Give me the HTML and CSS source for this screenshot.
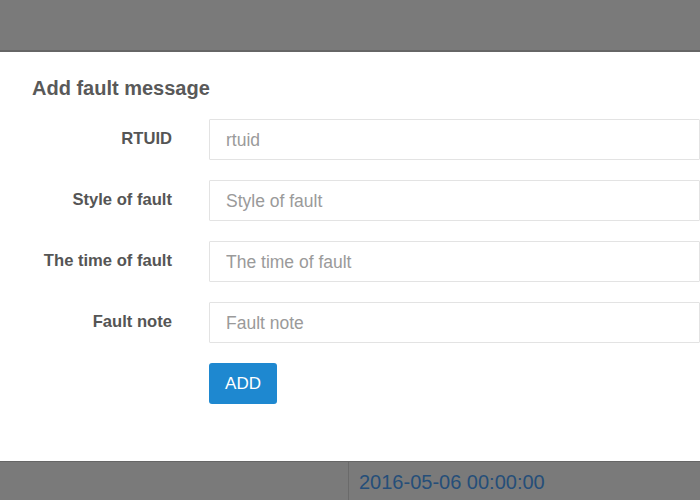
FILE: index.html
```html
<!DOCTYPE html>
<html>
<head>
<meta charset="utf-8">
<link rel="stylesheet" href="styles.css">
</head>
<body>
<div class="top"></div>
<div class="modal">
  <h4 class="title">Add fault message</h4>
  <form class="form">
    <div class="row">
      <label class="label">RTUID</label>
      <input class="input" type="text" placeholder="rtuid">
    </div>
    <div class="row">
      <label class="label">Style of fault</label>
      <input class="input" type="text" placeholder="Style of fault">
    </div>
    <div class="row">
      <label class="label">The time of fault</label>
      <input class="input" type="text" placeholder="The time of fault">
    </div>
    <div class="row">
      <label class="label">Fault note</label>
      <input class="input" type="text" placeholder="Fault note">
    </div>
    <div class="row">
      <span class="label"></span>
      <button class="btn" type="button">ADD</button>
    </div>
  </form>
</div>
<div class="bottom">
  <div class="cell first"></div>
  <div class="cell">2016-05-06 00:00:00</div>
</div>
</body>
</html>
```
FILE: styles.css
```css
html, body {
  margin: 0;
  padding: 0;
  width: 700px;
  height: 500px;
  overflow: hidden;
  background: #7a7a7a;
  font-family: "Liberation Sans", Arial, sans-serif;
}
.top {
  height: 50px;
  border-bottom: 2px solid #666;
  box-sizing: content-box;
}
.modal {
  background: #fff;
  height: 409px;
  box-sizing: border-box;
  padding: 24px 0 0 32px;
  width: 720px;
}
.title {
  margin: 0 0 19px 0;
  font-size: 20px;
  font-weight: bold;
  color: #595959;
  line-height: 24px;
}
.form {
  display: flex;
  flex-direction: column;
  gap: 20px;
}
.row {
  display: flex;
  align-items: flex-start;
}
.label {
  width: 140px;
  text-align: right;
  font-weight: bold;
  font-size: 16.6px;
  line-height: 20px;
  color: #555;
  padding-top: 10px;
  margin-right: 37px;
  flex: none;
}
.input {
  width: 491px;
  height: 41px;
  box-sizing: border-box;
  border: 1px solid #e3e3e3;
  border-radius: 1px;
  padding: 1px 16px 0;
  font-family: "Liberation Sans", Arial, sans-serif;
  font-size: 17.5px;
  color: #555;
  outline: none;
  flex: none;
}
.input::placeholder {
  color: #9a9a9a;
}
.btn {
  width: 68px;
  height: 41px;
  border: none;
  border-radius: 3px;
  background: #1e88d0;
  color: #fff;
  font-family: "Liberation Sans", Arial, sans-serif;
  font-size: 17px;
  padding: 0;
}
.bottom {
  display: flex;
  height: 39px;
  border-top: 1px solid #666;
  box-sizing: border-box;
}
.cell {
  font-size: 20px;
  color: #254e79;
  padding: 9px 0 0 10px;
}
.cell.first {
  width: 348px;
  border-right: 1px solid #6a6a6a;
  padding: 0;
}
```
